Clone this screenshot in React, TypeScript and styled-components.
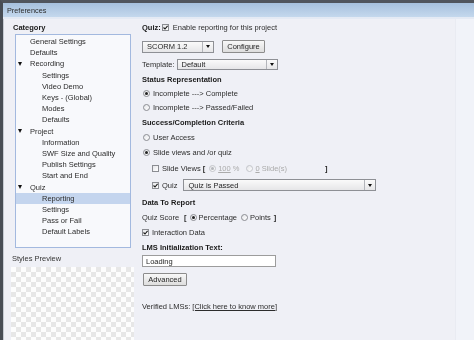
import React from "react";
import styled, { createGlobalStyle } from "styled-components";

const Global = createGlobalStyle`
  html, body { margin: 0; padding: 0; background: #eff0f6; }
  body {
    font-family: "Liberation Sans", Arial, sans-serif;
    font-size: 7.5px;
    color: #262626;
    -webkit-font-smoothing: antialiased;
  }
  * { box-sizing: border-box; }
`;

const Window = styled.div`
  width: 474px;
  height: 340px;
  overflow: hidden;
  display: flex;
  flex-direction: column;
  background: #eff0f6;
  border-top: 3px solid #50555d;
  border-left: 3px solid #484d55;
  box-shadow: inset 1px 0 0 #c6cbd3;
`;

const TitleBar = styled.div`
  flex: none;
  height: 16px;
  padding: 2px 0 0 4px;
  line-height: 12px;
  background: linear-gradient(#a6c0dd, #c4d8ed);
  border-bottom: 2px solid #e4eaf4;
`;

const Gray = styled.span`
  display: inline-block;
  filter: grayscale(1);
`;

const TitleText = styled(Gray)`
  font-size: 7.3px;
  color: #2a2d33;
`;

const Content = styled.div`
  flex: 1;
  min-height: 0;
  display: flex;
`;

const LeftPanel = styled.div`
  flex: none;
  width: 134px;
  padding: 4px 0 0 8px;
  display: flex;
  flex-direction: column;
`;

const PanelLabel = styled.div<{ $bold?: boolean; $pl: number; $mt?: number }>`
  line-height: 10px;
  height: 10px;
  padding-left: ${(p) => p.$pl}px;
  margin-top: ${(p) => p.$mt ?? 0}px;
  font-weight: ${(p) => (p.$bold ? "bold" : "normal")};
  color: ${(p) => (p.$bold ? "#1a1a1a" : "#363636")};
  white-space: nowrap;
  filter: grayscale(1);
`;

const TreeBox = styled.div`
  margin: 1px 0 0 4px;
  width: 116px;
  border: 1px solid #a3b9df;
  background: #f8f9fc;
  padding: 1px 0 10px;
`;

const TreeRow = styled.div<{ $level: number; $selected?: boolean }>`
  height: 11.2px;
  display: flex;
  align-items: center;
  padding-left: ${(p) => 2 + p.$level * 12}px;
  background: ${(p) => (p.$selected ? "#c4d5ee" : "transparent")};
  white-space: nowrap;
`;

const TreeLabel = styled(Gray)`
  color: #2c2c2c;
`;

const CaretSlot = styled.span`
  flex: none;
  width: 12px;
  display: flex;
  align-items: center;
`;

const Caret = styled.span`
  width: 0;
  height: 0;
  border-left: 2.5px solid transparent;
  border-right: 2.5px solid transparent;
  border-top: 4px solid #111;
`;

const Checker = styled.div`
  flex: 1;
  margin-top: 3px;
  width: 123px;
  background-color: #fdfdfd;
  background-image: conic-gradient(#e7e7e7 25%, #fdfdfd 0 50%, #e7e7e7 0 75%, #fdfdfd 0);
  background-size: 10px 10px;
`;

const RightPanel = styled.div`
  flex: 1;
  padding-left: 5px;
  display: flex;
  flex-direction: column;
`;

const RightStrip = styled.div`
  flex: none;
  width: 19px;
  background: #f1f3f9;
  border-left: 1px solid #e9ebf2;
`;

const Row = styled.div<{ $mt: number; $indent?: number; $h?: number }>`
  display: flex;
  align-items: center;
  height: ${(p) => p.$h ?? 12}px;
  margin-top: ${(p) => p.$mt}px;
  padding-left: ${(p) => p.$indent ?? 0}px;
  white-space: nowrap;
`;

const Heading = styled(Gray)`
  font-weight: bold;
  color: #1a1a1a;
`;

const Text = styled(Gray)<{ $ml?: number; $dim?: boolean; $bold?: boolean }>`
  margin-left: ${(p) => p.$ml ?? 0}px;
  color: ${(p) => (p.$dim ? "#a9abb0" : "#2c2c2c")};
  font-weight: ${(p) => (p.$bold ? "bold" : "normal")};
  white-space: pre;
`;

const Under = styled.span`
  text-decoration: underline;
`;

const Box = styled.span<{ $ml?: number }>`
  flex: none;
  width: 7px;
  height: 7px;
  margin-left: ${(p) => p.$ml ?? 0}px;
  border: 1px solid #8b8d92;
  background: linear-gradient(135deg, #e6e7ea, #ffffff);
  display: flex;
  align-items: center;
  justify-content: center;
`;

const RadioDot = styled.span<{ $ml?: number; $checked?: boolean; $disabled?: boolean }>`
  flex: none;
  width: 7px;
  height: 7px;
  margin-left: ${(p) => p.$ml ?? 0}px;
  border-radius: 50%;
  border: 1px solid ${(p) => (p.$disabled ? "#c3c5ca" : "#8b8d92")};
  background: linear-gradient(135deg, #e4e5e9, #ffffff);
  display: flex;
  align-items: center;
  justify-content: center;
  &::after {
    content: "";
    display: ${(p) => (p.$checked ? "block" : "none")};
    width: 3px;
    height: 3px;
    border-radius: 50%;
    background: ${(p) => (p.$disabled ? "#b5b7bc" : "#222")};
  }
`;

const SelectBox = styled.div<{ $w: number; $ml?: number; $h?: number }>`
  flex: none;
  width: ${(p) => p.$w}px;
  height: ${(p) => p.$h ?? 12}px;
  margin-left: ${(p) => p.$ml ?? 0}px;
  border: 1px solid #8e9095;
  background: linear-gradient(#fafafa, #e6e6e8);
  display: flex;
  align-items: center;
`;

const SelectText = styled(Gray)`
  flex: 1;
  padding-left: 4px;
  color: #262626;
`;

const SelectArrow = styled.span`
  flex: none;
  width: 11px;
  height: 100%;
  border-left: 1px solid #b3b5ba;
  display: flex;
  align-items: center;
  justify-content: center;
  &::after {
    content: "";
    border-left: 2.5px solid transparent;
    border-right: 2.5px solid transparent;
    border-top: 3px solid #111;
  }
`;

const Button = styled.button<{ $w: number; $ml?: number }>`
  flex: none;
  width: ${(p) => p.$w}px;
  height: 13px;
  margin-left: ${(p) => p.$ml ?? 0}px;
  padding: 0;
  border: 1px solid #8a8c91;
  border-radius: 1px;
  background: linear-gradient(#f8f8f8, #dcdddf);
  font: inherit;
  color: #1f1f1f;
  filter: grayscale(1);
`;

const TextField = styled.input`
  width: 134px;
  height: 12px;
  border: 1px solid #9a9ca1;
  background: #fff;
  padding: 0 0 0 3px;
  font: inherit;
  color: #262626;
  outline: none;
  filter: grayscale(1);
`;

const LinkText = styled.span`
  text-decoration: underline;
`;

const CheckBox = ({ checked, ml }: { checked?: boolean; ml?: number }) => (
  <Box $ml={ml}>
    {checked && (
      <svg width="5" height="5" viewBox="0 0 5 5">
        <path d="M0.5 2.5 L2 4 L4.6 0.8" fill="none" stroke="#1a1a1a" strokeWidth="1.1" />
      </svg>
    )}
  </Box>
);

const Select = ({ w, ml, h, children }: { w: number; ml?: number; h?: number; children: React.ReactNode }) => (
  <SelectBox $w={w} $ml={ml} $h={h}>
    <SelectText>{children}</SelectText>
    <SelectArrow />
  </SelectBox>
);

type Node = { label: string; level: number; caret?: boolean; selected?: boolean };

const tree: Node[] = [
  { label: "General Settings", level: 0 },
  { label: "Defaults", level: 0 },
  { label: "Recording", level: 0, caret: true },
  { label: "Settings", level: 1 },
  { label: "Video Demo", level: 1 },
  { label: "Keys - (Global)", level: 1 },
  { label: "Modes", level: 1 },
  { label: "Defaults", level: 1 },
  { label: "Project", level: 0, caret: true },
  { label: "Information", level: 1 },
  { label: "SWF Size and Quality", level: 1 },
  { label: "Publish Settings", level: 1 },
  { label: "Start and End", level: 1 },
  { label: "Quiz", level: 0, caret: true },
  { label: "Reporting", level: 1, selected: true },
  { label: "Settings", level: 1 },
  { label: "Pass or Fail", level: 1 },
  { label: "Default Labels", level: 1 },
];

export default function App() {
  return (
    <>
      <Global />
      <Window>
        <TitleBar>
          <TitleText>Preferences</TitleText>
        </TitleBar>
        <Content>
          <LeftPanel>
            <PanelLabel $bold $pl={2}>Category</PanelLabel>
            <TreeBox>
              {tree.map((n, i) => (
                <TreeRow key={i} $level={n.level} $selected={n.selected}>
                  <CaretSlot>{n.caret && <Caret />}</CaretSlot>
                  <TreeLabel>{n.label}</TreeLabel>
                </TreeRow>
              ))}
            </TreeBox>
            <PanelLabel $pl={1} $mt={6}>Styles Preview</PanelLabel>
            <Checker />
          </LeftPanel>
          <RightPanel>
            <Row $mt={2}>
              <Heading>Quiz:</Heading>
              <CheckBox checked ml={1} />
              <Text $ml={4}>Enable reporting for this project</Text>
            </Row>
            <Row $mt={7} $h={13}>
              <Select w={72}>SCORM 1.2</Select>
              <Button $w={43} $ml={8}>Configure</Button>
            </Row>
            <Row $mt={5}>
              <Text>Template:</Text>
              <Select w={101} ml={2} h={11}>Default</Select>
            </Row>
            <Row $mt={3}>
              <Heading>Status Representation</Heading>
            </Row>
            <Row $mt={2}>
              <RadioDot $checked $ml={1} />
              <Text $ml={3}>Incomplete ---&gt; Complete</Text>
            </Row>
            <Row $mt={2}>
              <RadioDot $ml={1} />
              <Text $ml={3}>Incomplete ---&gt; Passed/Failed</Text>
            </Row>
            <Row $mt={3}>
              <Heading>Success/Completion Criteria</Heading>
            </Row>
            <Row $mt={3}>
              <RadioDot $ml={1} />
              <Text $ml={3}>User Access</Text>
            </Row>
            <Row $mt={3}>
              <RadioDot $checked $ml={1} />
              <Text $ml={3}>Slide views and /or quiz</Text>
            </Row>
            <Row $mt={4} $indent={10}>
              <CheckBox />
              <Text $ml={3}>Slide Views</Text>
              <Text $ml={2} $bold>[</Text>
              <RadioDot $checked $disabled $ml={4} />
              <Text $ml={2} $dim><Under>100</Under> %</Text>
              <RadioDot $disabled $ml={7} />
              <Text $ml={2} $dim><Under>0</Under> Slide(s)</Text>
              <Text $ml={38} $bold>]</Text>
            </Row>
            <Row $mt={5} $indent={10}>
              <CheckBox checked />
              <Text $ml={3}>Quiz</Text>
              <Select w={193} ml={6}>Quiz is Passed</Select>
            </Row>
            <Row $mt={5}>
              <Heading>Data To Report</Heading>
            </Row>
            <Row $mt={3}>
              <Text>Quiz Score</Text>
              <Text $ml={5} $bold>[</Text>
              <RadioDot $checked $ml={3} />
              <Text $ml={2}>Percentage</Text>
              <RadioDot $ml={4} />
              <Text $ml={2}>Points</Text>
              <Text $ml={3} $bold>]</Text>
            </Row>
            <Row $mt={3}>
              <CheckBox checked />
              <Text $ml={3}>Interaction Data</Text>
            </Row>
            <Row $mt={3}>
              <Heading>LMS Initialization Text:</Heading>
            </Row>
            <Row $mt={2}>
              <TextField readOnly value="Loading" />
            </Row>
            <Row $mt={6} $h={13}>
              <Button $w={44} $ml={1}>Advanced</Button>
            </Row>
            <Row $mt={14}>
              <Text>Verified LMSs:</Text>
              <Text $ml={2}><LinkText>[Click here to know more]</LinkText></Text>
            </Row>
          </RightPanel>
          <RightStrip />
        </Content>
      </Window>
    </>
  );
}
